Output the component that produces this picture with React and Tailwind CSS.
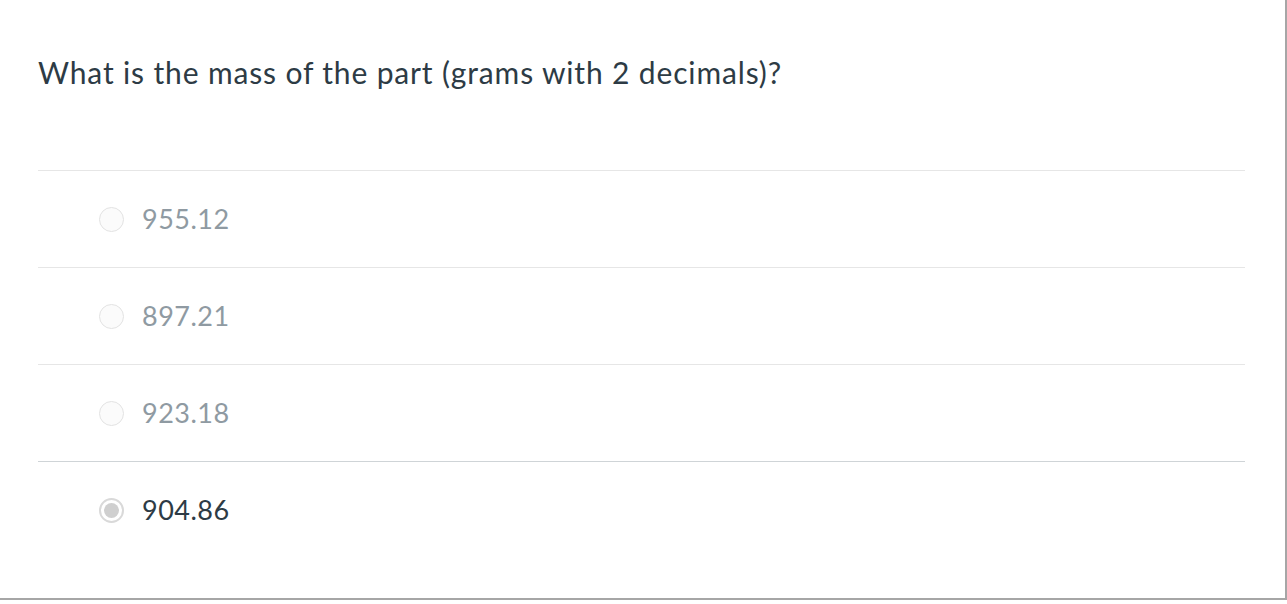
const options = [
  { value: '955.12', selected: false },
  { value: '897.21', selected: false },
  { value: '923.18', selected: false },
  { value: '904.86', selected: true },
];

function Radio({ checked }) {
  return checked ? (
    <span className="flex h-[25px] w-[25px] items-center justify-center rounded-full border-2 border-[#d9d9d9] bg-white">
      <span className="h-[15px] w-[15px] rounded-full bg-[#cfcfcf]" />
    </span>
  ) : (
    <span className="h-[25px] w-[25px] rounded-full border border-[#e3e3e3] bg-[#fbfbfb]" />
  );
}

export default function App() {
  return (
    <div className="h-[600px] w-[1287px] border-b-2 border-r-2 border-[#a6a6a6] bg-white font-['Lato','Noto_Sans',sans-serif]">
      <div className="pl-[38px] pr-[40px] pt-[51px]">
        <h1 className="text-[30px] leading-[42px] tracking-[0.85px] text-[#2d3b45]">
          What is the mass of the part (grams with 2 decimals)?
        </h1>

        <div className="mt-[77px]">
          {options.map((o, i) => (
            <label
              key={o.value}
              className={`flex h-[97px] items-center gap-[18px] border-t pl-[61px] ${i === 3 ? 'border-[#cfd4d7]' : 'border-[#e6e6e6]'}`}
            >
              <Radio checked={o.selected} />
              <span className={`text-[27px] tracking-[0.5px] ${o.selected ? 'text-[#2d3b45]' : 'text-[#8f9aa2]'}`}>{o.value}</span>
            </label>
          ))}
        </div>
      </div>
    </div>
  );
}
